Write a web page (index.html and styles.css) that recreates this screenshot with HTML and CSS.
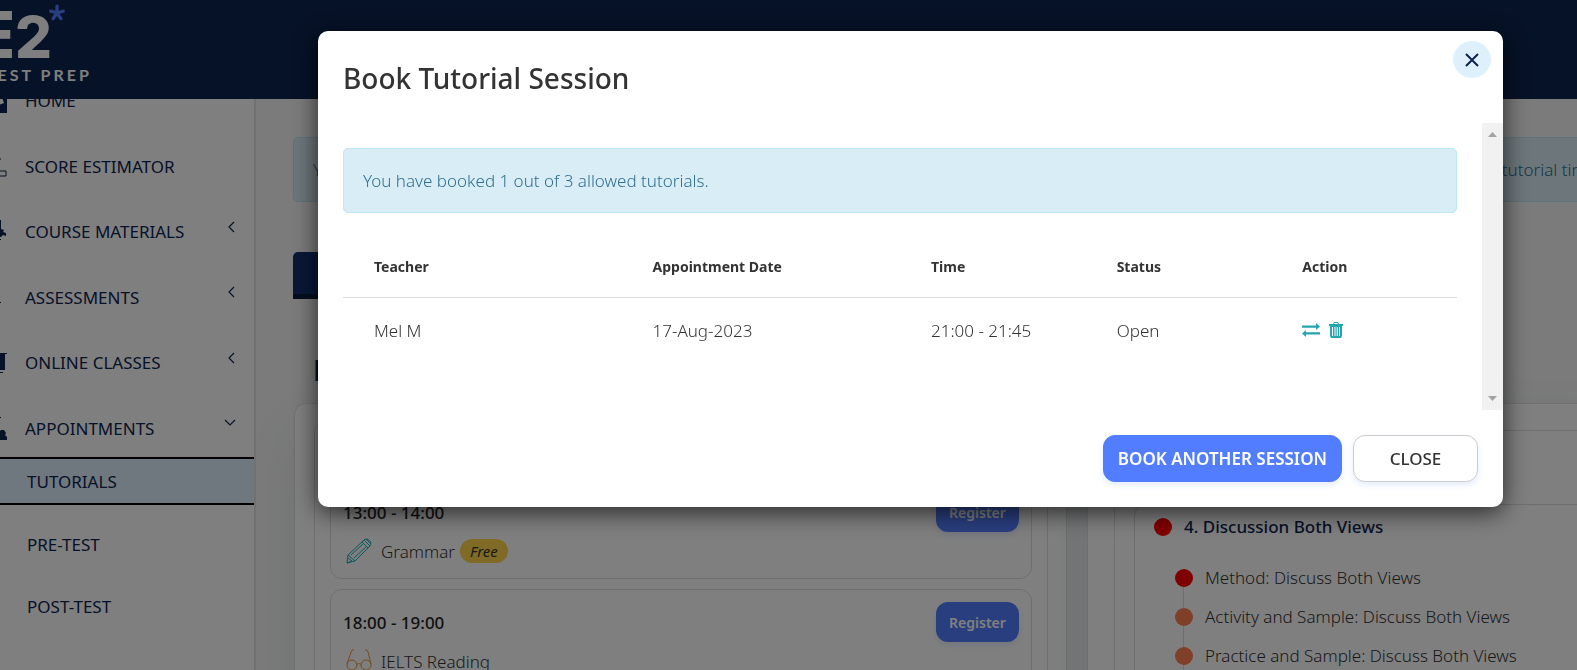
FILE: index.html
```html
<!DOCTYPE html>
<html lang="en">
<head>
    <meta charset="utf-8">
    <title>Book Tutorial Session</title>
    <link rel="stylesheet" href="styles.css">
</head>
<body>
    <header class="topbar">
        <a class="logo" href="#">
            <span class="logo-name"><span class="logo-e">E</span>2</span>
            <span class="logo-sub">TEST PREP</span>
            <svg class="logo-star" viewBox="0 0 16 16"><path d="M8 8V2M8 8L2.400 6.400M8 8l5.600-1.600M8 8l-3.500 5M8 8l3.500 5"/></svg>
        </a>
    </header>

    <div class="layout">
        <nav class="sidebar">
            <ul class="menu">
                <li><a href="#"><svg class="menu-icon" viewBox="0 0 24 24"><path d="M0 0h24v24H0z"/><path class="cut" d="M10 18V10l7-7 4 11z"/></svg><span>HOME</span></a></li>
                <li><a href="#"><svg class="menu-icon outline" viewBox="0 0 24 24"><path d="M4 5h14M4 17h19v5H4z"/></svg><span>SCORE ESTIMATOR</span></a></li>
                <li><a href="#"><svg class="menu-icon" viewBox="0 0 24 24"><path d="M8 0h10v9l3 1-1 2 3 1v3l-3-1-2 2H8zM8 19h10v1H8zM8 22h9v1H8z"/></svg><span>COURSE MATERIALS</span><svg class="chevron" viewBox="0 0 12 12"><path d="M10 1L5 6l5 5"/></svg></a></li>
                <li><a href="#"><svg class="menu-icon" viewBox="0 0 24 24"><path d="M6 17h12v1H6z"/></svg><span>ASSESSMENTS</span><svg class="chevron" viewBox="0 0 12 12"><path d="M10 1L5 6l5 5"/></svg></a></li>
                <li><a href="#"><svg class="menu-icon" viewBox="0 0 24 24"><path d="M4 2h18v17H4zM22 2h2v1h-2zM17 21h3v1h-3z"/></svg><span>ONLINE CLASSES</span><svg class="chevron" viewBox="0 0 12 12"><path d="M10 1L5 6l5 5"/></svg></a></li>
                <li><a href="#"><svg class="menu-icon" viewBox="0 0 24 24"><path d="M6 1h12v1H6zM12 24v-3l5-2-1-3 2-2h3l2 3-1 2 2 2v3z"/></svg><span>APPOINTMENTS</span><svg class="chevron" viewBox="0 0 12 12"><path d="M1 3l5 5 5-5"/></svg></a></li>
            </ul>
            <ul class="submenu">
                <li class="active"><a href="#">TUTORIALS</a></li>
                <li><a href="#">PRE-TEST</a></li>
                <li><a href="#">POST-TEST</a></li>
            </ul>
        </nav>

        <main class="content">
            <div class="alert page-alert"><span>You</span><span>tutorial time</span></div>
            <div class="tab"></div>
            <h2 class="section-title">Live</h2>
            <div class="cards">
                <section class="card">
                    <div class="panel schedule">
                        <article class="lesson">
                            <div class="lesson-head">
                                <strong>13:00 - 14:00</strong>
                                <button class="register">Register</button>
                            </div>
                            <div class="lesson-name">
                                <svg class="lesson-icon pencil" viewBox="0 0 26 26"><path d="M1 25l1-8L18 2c3-3 9 2 6 6L9 23zM2 17l7 6M1 25l5-2-4-3M16 4l6 6M18 2l6 6M20 1l5 5M5 17L17 6M8 20L20 9"/></svg>
                                <span>Grammar</span>
                                <em class="tag">Free</em>
                            </div>
                        </article>
                        <article class="lesson">
                            <div class="lesson-head">
                                <strong>18:00 - 19:00</strong>
                                <button class="register">Register</button>
                            </div>
                            <div class="lesson-name">
                                <svg class="lesson-icon glasses" viewBox="0 0 26 26"><circle cx="6" cy="17" r="5"/><circle cx="20" cy="17" r="5"/><path d="M11 17c1-2 3-2 4 0M1 16L5 4c0-2 2-2 3-2M25 16L22 4c0-2-2-2-3-2"/></svg>
                                <span>IELTS Reading</span>
                            </div>
                        </article>
                    </div>
                </section>
                <section class="card course">
                    <div class="panel topics">
                        <div class="topic">
                            <h3><span class="dot"></span>4. Discussion Both Views</h3>
                            <ul class="steps">
                                <li><span class="dot"></span>Method: Discuss Both Views</li>
                                <li><span class="dot todo"></span>Activity and Sample: Discuss Both Views</li>
                                <li><span class="dot todo"></span>Practice and Sample: Discuss Both Views</li>
                            </ul>
                        </div>
                    </div>
                </section>
            </div>
        </main>
    </div>

    <div class="overlay">
        <div class="modal" role="dialog" aria-labelledby="modalTitle">
            <div class="modal-header">
                <h1 id="modalTitle">Book Tutorial Session</h1>
                <button class="close" aria-label="Close">
                    <svg viewBox="0 0 14 14"><path d="M1 1l12 12M13 1L1 13"/></svg>
                </button>
            </div>
            <div class="modal-body">
                <div class="modal-scroll">
                    <div class="alert">You have booked 1 out of 3 allowed tutorials.</div>
                    <table class="sessions">
                        <thead>
                            <tr>
                                <th class="wide">Teacher</th>
                                <th class="wide">Appointment Date</th>
                                <th>Time</th>
                                <th>Status</th>
                                <th>Action</th>
                            </tr>
                        </thead>
                        <tbody>
                            <tr>
                                <td>Mel M</td>
                                <td>17-Aug-2023</td>
                                <td>21:00 - 21:45</td>
                                <td>Open</td>
                                <td>
                                    <div class="actions">
                                        <a href="#" aria-label="Reschedule"><svg class="swap" viewBox="0 0 18 14"><path d="M0 2.500h14V0l4 3.500-4 3.500V4.800H0zM18 9.200H4V7l-4 3.500L4 14v-2.500h14z"/></svg></a>
                                        <a href="#" aria-label="Delete"><svg class="trash" viewBox="0 0 14 16"><path fill-rule="evenodd" d="M4 2l1-2h4l1 2h4v2h-1v10l-1 2H2l-1-2V4H0V2zM5 2h4l-.500-1h-3zM3 5v9h1V5zM5.500 5v9h1V5zM7.700 5v9h1V5zM10 5v9h1V5z"/></svg></a>
                                    </div>
                                </td>
                            </tr>
                        </tbody>
                    </table>
                </div>
                <div class="scrollbar">
                    <svg viewBox="0 0 9 5"><path d="M0 5l4.500-5L9 5z"/></svg>
                    <svg viewBox="0 0 9 5"><path d="M0 0l4.500 5L9 0z"/></svg>
                </div>
            </div>
            <div class="modal-footer">
                <button class="btn btn-primary">BOOK ANOTHER SESSION</button>
                <button class="btn">CLOSE</button>
            </div>
        </div>
    </div>
</body>
</html>
```
FILE: styles.css
```css
* {
    box-sizing: border-box;
}

body {
    margin: 0;
    height: 100vh;
    overflow: hidden;
    display: flex;
    flex-direction: column;
    font-family: 'Noto Sans', 'Open Sans', sans-serif;
    font-size: 17px;
    font-weight: 300;
    color: #333;
    background: #f7f7f7;
}

ul, h1, h2, h3 {
    margin: 0;
    padding: 0;
    list-style: none;
}

a {
    color: inherit;
    text-decoration: none;
}

button {
    font-family: inherit;
    cursor: pointer;
}

svg {
    flex: none;
}

/* top bar */
.topbar {
    flex: none;
    height: 99px;
    background: #0d2450;
}

.logo {
    position: relative;
    display: flex;
    flex-direction: column;
    width: 100px;
    padding-top: 7px;
    margin-left: -24px;
    color: #fff;
    font-family: Inter, sans-serif;
    white-space: nowrap;
}

.logo-name {
    font-size: 58px;
    line-height: 56px;
    font-weight: 800;
}

.logo-e {
    font-size: 64px;
}

.logo-sub {
    margin-left: 9px;
    font-family: Lato, sans-serif;
    font-size: 16px;
    line-height: 20px;
    font-weight: 700;
    letter-spacing: 3px;
}

.logo-star {
    position: absolute;
    top: 4px;
    left: 72px;
    width: 18px;
    height: 18px;
    stroke: #527dff;
    stroke-width: 3;
    stroke-linecap: round;
}

.layout {
    flex: 1;
    min-height: 0;
    display: flex;
}

/* sidebar */
.sidebar {
    flex: none;
    width: 256px;
    overflow: hidden;
    background: #fff;
    border-right: 2px solid #e3e3e3;
    color: #0d2450;
    font-weight: 400;
}

.menu {
    display: grid;
    grid-auto-rows: 1fr;
    height: 393px;
    margin-top: -35px;
}

.menu a {
    display: flex;
    align-items: center;
    height: 100%;
    padding: 8px 18px 0 25px;
}

.menu-icon {
    width: 24px;
    height: 24px;
    margin-left: -42px;
    margin-right: 18px;
    fill: #0d2450;
}

.menu-icon .cut {
    fill: #fff;
}

.menu-icon.outline {
    fill: none;
    stroke: #0d2450;
}

.chevron {
    width: 12px;
    height: 12px;
    margin-left: auto;
    margin-bottom: 10px;
    fill: none;
    stroke: #0d2450;
    stroke-width: 1.2;
}

.submenu a {
    display: flex;
    align-items: center;
    height: 62px;
    padding-left: 27px;
}

.submenu .active {
    margin-bottom: 8px;
    background: #e0f0ff;
    border-top: 2px solid #000;
    border-bottom: 2px solid #000;
}

.submenu .active a {
    height: 44px;
}

/* page content */
.content {
    flex: 1;
    min-width: 0;
    overflow: hidden;
    padding: 38px 0 0 37px;
}

.alert {
    padding: 21px 19px;
    line-height: 21px;
    line-height: 21px;
    color: #31708f;
    background: #d9edf6;
    border: 1px solid #bce8f1;
    border-radius: 5px;
}

.page-alert {
    display: flex;
    justify-content: space-between;
    margin-right: -39px;
    white-space: nowrap;
}

.tab {
    width: 180px;
    height: 47px;
    margin-top: 50px;
    background: #12306e;
    border-bottom: 5px solid #0a1c42;
    border-radius: 5px 5px 0 0;
}

.section-title {
    margin: 51px 0 14px 20px;
    font-size: 29px;
    line-height: 39px;
    font-weight: 700;
    color: #0d2450;
}

.cards {
    display: flex;
    gap: 20px;
    margin-left: 1px;
    margin-right: -60px;
}

.card {
    width: 773px;
    height: 500px;
    flex: none;
    padding: 19px 18px 19px 19px;
    background: #fff;
    border: 1px solid #e0e0e0;
    border-radius: 12px;
    box-shadow: 0 20px 60px rgba(40, 70, 100, 0.1);
}

.course {
    flex: 1;
    padding: 26px;
}

.panel {
    height: 100%;
    border: 1px solid #e0e0e0;
    border-radius: 8px;
}

.schedule {
    display: flex;
    flex-direction: column;
    gap: 10px;
    padding: 55px 15px 0;
}

.lesson {
    height: 100px;
    padding: 12px 12px 0;
    border: 1px solid #dcdcdc;
    border-radius: 12px;
}

.lesson-head {
    display: flex;
    align-items: center;
    justify-content: space-between;
}

.lesson-head strong {
    font-weight: 500;
    color: #222;
}

.register {
    width: 83px;
    height: 40px;
    padding: 0;
    font-size: 14px;
    font-weight: 600;
    color: #fff;
    background: #527dff;
    border: none;
    border-radius: 12px;
    box-shadow: 0 3px 6px rgba(82, 125, 255, 0.15);
}

.lesson-name {
    display: flex;
    align-items: center;
    gap: 5px;
    height: 38px;
}

.lesson-icon {
    width: 26px;
    height: 26px;
    margin: 0 4px 0 3px;
    fill: none;
    stroke-width: 1;
}

.pencil {
    stroke: #18b2be;
}

.glasses {
    stroke: #e8973a;
}

.tag {
    padding: 0 10px;
    font-size: 15px;
    line-height: 24px;
    font-weight: 400;
    background: #ffd64a;
    border-radius: 12px;
}

.topics {
    padding: 73px 19px 0 19px;
}

.topic {
    height: 400px;
    padding: 10px 19px;
    border: 1px solid #dcdcdc;
    border-radius: 12px;
    white-space: nowrap;
}

.topic h3 {
    display: flex;
    align-items: center;
    gap: 12px;
    margin-bottom: 19px;
    font-size: 17px;
    line-height: 24px;
    font-weight: 500;
    color: #0d2450;
}

.dot {
    position: relative;
    flex: none;
    width: 18px;
    height: 18px;
    border-radius: 50%;
    background: #ff0000;
}

.todo {
    background: #ff7f50;
}

.steps {
    padding-left: 21px;
}

.steps li {
    display: flex;
    align-items: center;
    gap: 12px;
    height: 39px;
    background: linear-gradient(#dcdcdc, #dcdcdc) 8px 19px / 1px 100% no-repeat;
}

.steps li + li {
    background-position: 8px 0;
}

/* modal */
.overlay {
    position: fixed;
    inset: 0;
    padding: 31px 74px 0 318px;
    background: rgba(0, 0, 0, 0.5);
}

.modal {
    background: #fff;
    border-radius: 10px;
    box-shadow: 0 5px 24px rgba(0, 0, 0, 0.7);
}

.modal-header {
    display: flex;
    align-items: flex-start;
    justify-content: space-between;
    height: 92px;
    padding: 10px 12px 0 25px;
}

.modal-header h1 {
    padding-top: 18px;
    font-size: 28px;
    line-height: 38px;
    font-weight: 500;
}

.close {
    display: flex;
    align-items: center;
    justify-content: center;
    width: 38px;
    height: 37px;
    padding: 0;
    background: #dff0fd;
    border: none;
    border-radius: 50%;
}

.close svg {
    width: 14px;
    height: 14px;
    stroke: #0d2450;
    stroke-width: 2;
}

.modal-body {
    display: flex;
    height: 287px;
}

.modal-scroll {
    flex: 1;
    padding: 25px;
}

.scrollbar {
    display: flex;
    flex-direction: column;
    justify-content: space-between;
    align-items: center;
    width: 21px;
    padding: 9px 0;
    background: #f1f1f1;
}

.scrollbar svg {
    width: 9px;
    height: 5px;
    fill: #a3a3a3;
}

.sessions {
    width: 100%;
    margin-top: 24px;
    border-collapse: collapse;
    table-layout: fixed;
}

.sessions th,
.sessions td {
    height: 60px;
    padding: 0 0 0 31px;
    text-align: left;
}

.sessions th {
    font-size: 14px;
    font-weight: 700;
    border-bottom: 1px solid #ddd;
}

.sessions td {
    height: 66px;
}

.wide {
    width: 25%;
}

.actions {
    display: flex;
    align-items: center;
    gap: 9px;
    fill: #26a5b0;
}

.actions a {
    display: flex;
}

.swap {
    width: 18px;
    height: 14px;
}

.trash {
    width: 14px;
    height: 16px;
}

.modal-footer {
    display: flex;
    justify-content: flex-end;
    gap: 11px;
    padding: 25px;
}

.btn {
    height: 47px;
    min-width: 125px;
    padding: 0 14px;
    font-size: 17px;
    font-weight: 500;
    color: #333;
    background: #fff;
    border: 1px solid #ccc;
    border-radius: 12px;
    box-shadow: 0 3px 6px rgba(82, 125, 255, 0.15);
}

.btn-primary {
    font-weight: 600;
    color: #fff;
    background: #527dff;
    border-color: #527dff;
}
```
